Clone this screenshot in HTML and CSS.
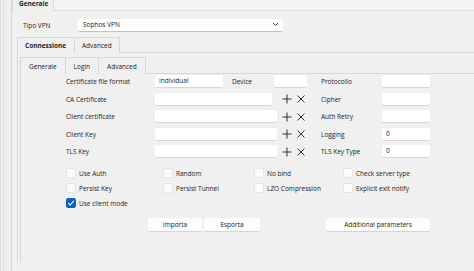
FILE: index.html
```html
<!DOCTYPE html>
<html lang="it">
<head>
    <meta charset="UTF-8">
    <meta name="viewport" content="width=device-width, initial-scale=1.0">
    <title>Connessione VPN</title>
    <link rel="stylesheet" href="styles.css">
</head>
<body>
    <div class="window">
        <div class="rail"></div>
        <div class="main">
            <div class="toptabs">
                <div class="toptab">Generale</div>
            </div>

            <div class="page">
                <div class="vpn-row">
                    <span class="vpn-label">Tipo VPN</span>
                    <div class="select">
                        <span>Sophos VPN</span>
                        <svg width="7" height="5" viewBox="0 0 7 5"><path d="M1 1 L3.5 3.5 L6 1" fill="none" stroke="#444" stroke-width="1"/></svg>
                    </div>
                </div>

                <div class="tabs">
                    <div class="tab active bold">Connessione</div>
                    <div class="tab">Advanced</div>
                    <div class="tab-fill"></div>
                </div>

                <div class="panel">
                    <div class="tabs inner">
                        <div class="tab active">Generale</div>
                        <div class="tab">Login</div>
                        <div class="tab">Advanced</div>
                        <div class="tab-fill"></div>
                    </div>

                    <div class="subpanel">
                        <div class="form">
                            <label>Certificate file format</label>
                            <div class="mid">
                                <div class="input fmt">Individual</div>
                                <label class="device-label">Device</label>
                                <div class="input device"></div>
                            </div>
                            <label class="rlabel">Protocollo</label>
                            <div class="input"></div>

                            <label>CA Certificate</label>
                            <div class="mid">
                                <div class="input grow short"></div>
                                <span class="icon"><svg width="10" height="10" viewBox="0 0 10 10"><path d="M5 0.5 V9.5 M0.5 5 H9.5" stroke="#333" stroke-width="1"/></svg></span>
                                <span class="icon"><svg width="10" height="10" viewBox="0 0 10 10"><path d="M1.5 1.5 L8.5 8.5 M8.5 1.5 L1.5 8.5" stroke="#333" stroke-width="1"/></svg></span>
                            </div>
                            <label class="rlabel">Cipher</label>
                            <div class="input"></div>

                            <label>Client certificate</label>
                            <div class="mid">
                                <div class="input grow"></div>
                                <span class="icon"><svg width="10" height="10" viewBox="0 0 10 10"><path d="M5 0.5 V9.5 M0.5 5 H9.5" stroke="#333" stroke-width="1"/></svg></span>
                                <span class="icon"><svg width="10" height="10" viewBox="0 0 10 10"><path d="M1.5 1.5 L8.5 8.5 M8.5 1.5 L1.5 8.5" stroke="#333" stroke-width="1"/></svg></span>
                            </div>
                            <label class="rlabel">Auth Retry</label>
                            <div class="input"></div>

                            <label>Client Key</label>
                            <div class="mid">
                                <div class="input grow"></div>
                                <span class="icon"><svg width="10" height="10" viewBox="0 0 10 10"><path d="M5 0.5 V9.5 M0.5 5 H9.5" stroke="#333" stroke-width="1"/></svg></span>
                                <span class="icon"><svg width="10" height="10" viewBox="0 0 10 10"><path d="M1.5 1.5 L8.5 8.5 M8.5 1.5 L1.5 8.5" stroke="#333" stroke-width="1"/></svg></span>
                            </div>
                            <label class="rlabel">Logging</label>
                            <div class="input">0</div>

                            <label>TLS Key</label>
                            <div class="mid">
                                <div class="input grow"></div>
                                <span class="icon"><svg width="10" height="10" viewBox="0 0 10 10"><path d="M5 0.5 V9.5 M0.5 5 H9.5" stroke="#333" stroke-width="1"/></svg></span>
                                <span class="icon"><svg width="10" height="10" viewBox="0 0 10 10"><path d="M1.5 1.5 L8.5 8.5 M8.5 1.5 L1.5 8.5" stroke="#333" stroke-width="1"/></svg></span>
                            </div>
                            <label class="rlabel">TLS Key Type</label>
                            <div class="input">0</div>
                        </div>

                        <div class="checks">
                            <div class="check"><span class="box"></span>Use Auth</div>
                            <div class="check"><span class="box"></span>Random</div>
                            <div class="check"><span class="box"></span>No bind</div>
                            <div class="check"><span class="box"></span>Check server type</div>

                            <div class="check"><span class="box"></span>Persist Key</div>
                            <div class="check"><span class="box"></span>Persist Tunnel</div>
                            <div class="check"><span class="box"></span>LZO Compression</div>
                            <div class="check"><span class="box"></span>Explicit exit notify</div>

                            <div class="check"><span class="box checked"><svg width="8" height="8" viewBox="0 0 8 8"><path d="M1.2 4.2 L3.2 6 L6.8 1.8" fill="none" stroke="#fff" stroke-width="1.1"/></svg></span>Use client mode</div>
                        </div>

                        <div class="buttons">
                            <button class="btn importa">Importa</button>
                            <button class="btn esporta">Esporta</button>
                            <button class="btn params">Additional parameters</button>
                        </div>
                    </div>
                </div>
            </div>
        </div>
    </div>
</body>
</html>
```

FILE: styles.css
```css
body {
    margin: 0;
    font-family: "Open Sans", Arial, sans-serif;
    font-size: 6.5px;
    color: #222;
    background-color: #f0f0f0;
}
.window {
    display: flex;
    width: 474px;
    height: 271px;
    overflow: hidden;
}
/* left edge of the host window */
.rail {
    width: 10px;
    border-left: 1px solid #dcdcdc;
    border-right: 1px solid #d6d6d6;
    box-shadow: inset 2px 0 0 #f0f0f0, inset 3px 0 0 #e0e0e0;
}
.main {
    flex: 1;
    display: flex;
    flex-direction: column;
}
.toptabs {
    display: flex;
    height: 11px;
    background-color: #f4f4f4;
}
.toptab {
    width: 42px;
    padding-left: 6px;
    box-sizing: border-box;
    font-weight: bold;
    line-height: 8px;
    border-left: 1px solid #dcdcdc;
    border-right: 1px solid #dcdcdc;
    background-color: #f0f0f0;
}
.toptabs::after {
    content: "";
    flex: 1;
    border-bottom: 1px solid #dcdcdc;
}
.page {
    flex: 1;
    display: flex;
    flex-direction: column;
    padding: 7px 0 0 5px;
}
.vpn-row {
    display: flex;
    align-items: center;
    margin-left: 6px;
    height: 14px;
}
.vpn-label {
    width: 55px;
}
.select {
    width: 205px;
    height: 13px;
    box-sizing: border-box;
    display: flex;
    align-items: center;
    justify-content: space-between;
    padding: 0 4px 0 5px;
    background-color: #fff;
    border-bottom: 1px solid #c4c4c4;
    border-radius: 2px;
}
.tabs {
    display: flex;
    height: 16px;
    margin-top: 5px;
}
.tab {
    padding: 0 7px;
    line-height: 16px;
    border: 1px solid #d8d8d8;
    border-bottom: none;
    border-left: none;
    box-sizing: border-box;
}
.tab.active {
    border-left: 1px solid #d8d8d8;
}
.tab.bold {
    font-weight: bold;
    width: 58px;
    padding-left: 7px;
}
.tab-fill {
    flex: 1;
    border-bottom: 1px solid #d8d8d8;
}
.panel {
    flex: 1;
    display: flex;
    flex-direction: column;
    margin-bottom: 8px;
    padding: 4px 0 0 2px;
    border-left: 1px solid #d8d8d8;
}
.tabs.inner {
    margin-top: 0;
    height: 17px;
}
.tabs.inner .tab {
    line-height: 17px;
    padding: 0 8px;
}
.subpanel {
    flex: 1;
    padding: 1px 0 0 45px;
    border-left: 1px solid #d8d8d8;
}
.form {
    display: grid;
    grid-template-columns: 89px 152px 75px 48px;
    grid-auto-rows: 13px;
    row-gap: 4.5px;
    align-items: center;
}
.form .rlabel {
    margin-left: 14px;
}
.mid {
    display: flex;
    align-items: center;
    height: 13px;
}
.input {
    height: 13px;
    box-sizing: border-box;
    padding-left: 4px;
    line-height: 12px;
    background-color: #fff;
    border-bottom: 1px solid #d6d6d6;
    border-radius: 2px;
}
.input.fmt {
    width: 68px;
}
.device-label {
    width: 42px;
    margin-left: 9px;
}
.input.device {
    width: 33px;
}
.input.grow {
    flex: 1;
    margin-right: 3px;
}
.input.short {
    margin-right: 8px;
}
.icon {
    width: 13px;
    height: 13px;
    display: flex;
    align-items: center;
    justify-content: center;
}
.icon + .icon {
    margin-left: 1px;
}
.checks {
    display: grid;
    grid-template-columns: 97px 91px 89px auto;
    grid-auto-rows: 10px;
    row-gap: 5px;
    margin-top: 10px;
}
.check {
    display: flex;
    align-items: center;
    gap: 3px;
}
.box {
    width: 10px;
    height: 10px;
    box-sizing: border-box;
    background-color: #fbfbfb;
    border: 1px solid #e4e4e4;
    border-radius: 2px;
    display: flex;
    align-items: center;
    justify-content: center;
}
.box.checked {
    background-color: #0a64c6;
    border-color: #0a64c6;
}
.buttons {
    display: flex;
    margin: 10px 0 0 82px;
}
.btn {
    height: 14px;
    padding: 0;
    font-family: inherit;
    font-size: inherit;
    color: #222;
    background-color: #fdfdfd;
    border: none;
    border-bottom: 1px solid #d4d4d4;
    border-radius: 2px;
}
.btn.importa {
    width: 54px;
}
.btn.esporta {
    width: 56px;
    margin-left: 2px;
}
.btn.params {
    width: 104px;
    margin-left: 66px;
}
```
